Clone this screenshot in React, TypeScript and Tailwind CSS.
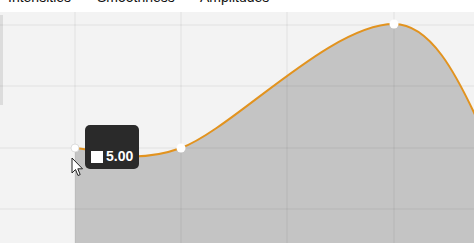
import React from 'react';

const curve =
  'M75,148 C92,148 128,167 181,148 C234,128 330,24 394,24 C430,24 456,72 482,130';

export default function App() {
  const vx = [75, 181, 287, 394];
  const hy = [25, 86, 148, 209];

  return (
    <div
      className="w-[474px] h-[245px] bg-white overflow-hidden flex flex-col"
      style={{ fontFamily: '"Liberation Sans", Arial, sans-serif' }}
    >
      {/* top labels, cut by the frame */}
      <div className="h-[12px] overflow-hidden relative shrink-0">
        <div className="flex pl-[8px] -mt-[10px] text-[14px] leading-[14px] text-[#111] whitespace-nowrap">
          <span className="w-[89px]">Intensities</span>
          <span className="w-[103px]">Smoothness</span>
          <span>Amplitudes</span>
        </div>
      </div>

      <div className="relative h-[231px] bg-[#f3f3f3] shrink-0">
        <div className="absolute left-0 top-[3px] w-[3px] h-[90px] bg-[#dcdcdc]" />
        <svg
          className="absolute inset-0"
          width={474}
          height={231}
          viewBox="0 12 474 231"
        >
          <path d={`${curve} L482,243 L75,243 Z`} fill="#c4c4c4" />
          {vx.map((x) => (
            <line key={x} x1={x} y1={12} x2={x} y2={243} stroke="rgba(0,0,0,0.07)" strokeWidth={1} />
          ))}
          {hy.map((y) => (
            <line key={y} x1={0} y1={y} x2={474} y2={y} stroke="rgba(0,0,0,0.07)" strokeWidth={1} />
          ))}
          <path d={curve} fill="none" stroke="#e2931f" strokeWidth={2} />
          <circle cx={75} cy={148} r={4} fill="#fff" stroke="#d6d6d6" strokeWidth={0.8} />
          <circle cx={181} cy={148} r={4.5} fill="#fff" />
          <circle cx={394} cy={24} r={4.5} fill="#fff" />
        </svg>

        {/* tooltip */}
        <div className="absolute left-[85px] top-[113px] w-[54px] h-[44px] rounded-[5px] bg-[#2a2a2a] flex items-end pb-[5px] pl-[6px] gap-[3px]">
          <span className="w-[12px] h-[12px] bg-white mb-[1px] shrink-0" />
          <span className="text-white text-[14px] font-bold leading-[15px]">5.00</span>
        </div>

        {/* mouse cursor */}
        <svg className="absolute left-[71px] top-[145px]" width={14} height={21} viewBox="0 0 14 21">
          <path
            d="M1,1 L1,16 L4.5,12.5 L7,18.5 L9.2,17.6 L6.8,11.8 L11.5,11.8 Z"
            fill="#fff"
            stroke="#222"
            strokeWidth={1}
            strokeLinejoin="round"
          />
        </svg>
      </div>
    </div>
  );
}
